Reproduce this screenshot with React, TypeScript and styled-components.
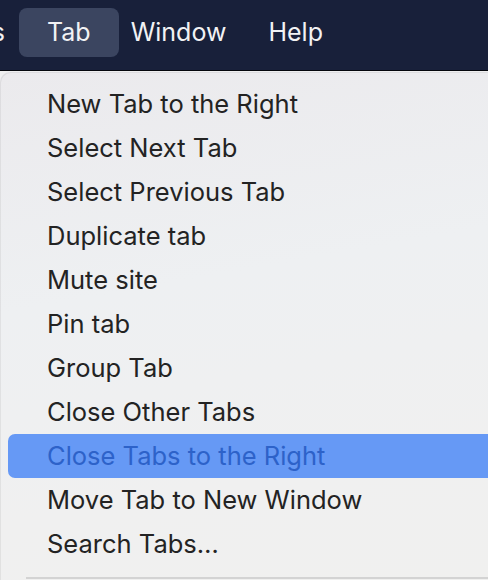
import styled, { createGlobalStyle } from "styled-components";

const Global = createGlobalStyle`
  html, body {
    margin: 0;
    padding: 0;
    width: 488px;
    height: 580px;
    overflow: hidden;
    background: #efeff0;
  }
  body {
    font-family: Inter, "Noto Sans", "Liberation Sans", sans-serif;
    -webkit-font-smoothing: antialiased;
  }
`;

const Screen = styled.div`
  width: 488px;
  height: 580px;
  display: flex;
  flex-direction: column;
  overflow: hidden;
`;

const MenuBar = styled.div`
  height: 70px;
  flex: none;
  background: #18203a;
  border-bottom: 1px solid #05070d;
  display: flex;
  align-items: center;
  overflow: hidden;
`;

type BarItemProps = { $active?: boolean };

const BarItem = styled.div<BarItemProps>`
  height: 49px;
  margin-top: -6px;
  display: flex;
  align-items: center;
  padding: 0 ${(p) => (p.$active ? 28 : 21)}px;
  margin-left: ${(p) => (p.$active ? -7 : 0)}px;
  margin-right: ${(p) => (p.$active ? -9 : 0)}px;
  border-radius: 8px;
  background: ${(p) => (p.$active ? "#3b4560" : "transparent")};
  color: #f2f2f4;
  font-size: 25px;
  white-space: nowrap;
`;

/* previous menu title, scrolled mostly off the left edge */
const CutItem = styled(BarItem)`
  flex: none;
  width: 5px;
  overflow: hidden;
  padding-left: 0;
  justify-content: flex-end;
`;

const Menu = styled.div`
  flex: 1;
  width: 540px;
  margin-top: 1px;
  padding: 10px 0 0 8px;
  border-top-left-radius: 10px;
  background: linear-gradient(170deg, #ebeaed 0%, #eef0f2 40%, #f0f0f0 75%, #f0f0ef 100%);
  box-shadow: inset 1px 1px 0 rgba(0, 0, 0, 0.06);
  display: flex;
  flex-direction: column;
`;

type RowProps = { $selected?: boolean };

const Row = styled.div<RowProps>`
  height: 44px;
  display: flex;
  align-items: center;
  padding-left: 39px;
  padding-bottom: 1px;
  box-sizing: border-box;
  border-radius: 7px;
  background: ${(p) => (p.$selected ? "#6699f5" : "transparent")};
  color: ${(p) => (p.$selected ? "#2d62c9" : "#232323")};
  font-size: 25.5px;
  white-space: nowrap;
`;

const Separator = styled.div`
  height: 2px;
  margin: 11px 0 0 18px;
  background: #d3d3d3;
`;

const items = [
  "New Tab to the Right",
  "Select Next Tab",
  "Select Previous Tab",
  "Duplicate tab",
  "Mute site",
  "Pin tab",
  "Group Tab",
  "Close Other Tabs",
  "Close Tabs to the Right",
  "Move Tab to New Window",
  "Search Tabs…",
];

export default function App() {
  return (
    <Screen>
      <Global />
      <MenuBar>
        <CutItem>Profiles</CutItem>
        <BarItem $active>Tab</BarItem>
        <BarItem>Window</BarItem>
        <BarItem>Help</BarItem>
      </MenuBar>
      <Menu>
        {items.map((label) => (
          <Row key={label} $selected={label === "Close Tabs to the Right"}>
            {label}
          </Row>
        ))}
        <Separator />
      </Menu>
    </Screen>
  );
}
